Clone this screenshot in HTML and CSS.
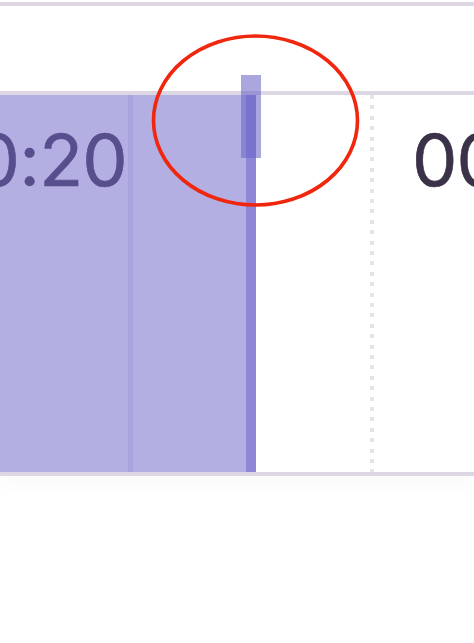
FILE: index.html
```html
<!DOCTYPE html>
<html lang="en">
<head>
  <meta charset="UTF-8">
  <meta name="viewport" content="width=device-width, initial-scale=1.0">
  <title>Timeline</title>
  <link rel="stylesheet" href="styles.css">
</head>
<body>
  <div class="toolbar-edge"></div>
  <div class="ruler"></div>

  <div class="track">
    <div class="cells">
      <div class="cell"><span class="cell-time">00:20</span></div>
      <div class="divider divider-solid"></div>
      <div class="cell"></div>
      <div class="divider divider-dotted"></div>
      <div class="cell"><span class="cell-time">00:30</span></div>
    </div>
    <!-- selected range, drawn over the cells -->
    <div class="selection"></div>
    <div class="playhead"></div>
  </div>

  <div class="handle"></div>

  <svg class="marker" width="474" height="643" viewBox="0 0 474 643">
    <ellipse cx="255.5" cy="120.5" rx="102" ry="84.5" fill="none" stroke="#f0260f" stroke-width="3.6"/>
  </svg>
</body>
</html>
```

FILE: styles.css
```css
body {
  margin: 0;
  background: #fff;
  font-family: Inter, 'Noto Sans', sans-serif;
  overflow: hidden;
  position: relative;
  height: 643px;
}
.toolbar-edge {
  margin-top: 2px;
  height: 4px;
  background: #ddd7e4;
}
.ruler {
  height: 85px;
}
.track {
  position: relative;
  height: 377px;
  border-top: 4px solid #ddd7e4;
  border-bottom: 4px solid #ddd7e4;
  overflow: hidden;
  box-shadow: 0 10px 18px rgba(0, 0, 0, 0.025);
}
.cells {
  display: flex;
  height: 100%;
  margin-left: -108px;
}
.cell {
  flex: 0 0 236px;
  min-width: 0;
  padding: 30px 0 0 38px;
  box-sizing: border-box;
}
.cell-time {
  display: block;
  font-size: 72px;
  font-weight: 400;
  line-height: 70px;
  letter-spacing: -0.8px;
  color: #3b3249;
  white-space: nowrap;
  -webkit-text-stroke: 0.6px #3b3249;
}
.divider {
  flex: 0 0 5px;
}
.divider-solid {
  background: #eae8f0;
}
.divider-dotted {
  background: repeating-linear-gradient(to bottom, #e4e2ea 0 4px, transparent 4px 10.4px);
  background-size: 4px 100%;
  background-repeat: no-repeat;
  background-position: 1px 0;
}
.selection {
  position: absolute;
  top: 0;
  bottom: 0;
  left: 0;
  width: 246px;
  background: rgba(112, 103, 202, 0.53);
}
.playhead {
  position: absolute;
  top: 0;
  bottom: 0;
  left: 246px;
  width: 10px;
  background: #8e87d6;
}
.handle {
  position: absolute;
  top: 75px;
  left: 241px;
  width: 20px;
  height: 83px;
  background: rgba(107, 100, 198, 0.575);
}
.marker {
  position: absolute;
  top: 0;
  left: 0;
  pointer-events: none;
}
```
